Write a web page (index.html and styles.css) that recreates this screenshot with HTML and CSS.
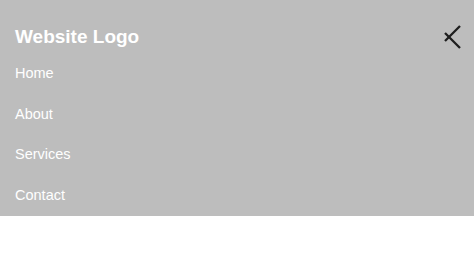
FILE: index.html
```html
<!DOCTYPE html>
<html lang="en">
<head>
    <meta charset="UTF-8">
    <meta name="viewport" content="width=device-width, initial-scale=1.0">
    <title>Website Logo</title>
    <link rel="stylesheet" href="styles.css">
</head>
<body>
    <div class="menu">
        <div class="menu-header">
            <span class="logo">Website Logo</span>
            <button class="close-btn" aria-label="Close menu">
                <svg width="20" height="26" viewBox="0 0 20 26">
                    <line x1="18" y1="2" x2="3" y2="17" />
                    <line x1="3" y1="9" x2="18" y2="24" />
                </svg>
            </button>
        </div>
        <ul class="nav-list">
            <li><a href="#">Home</a></li>
            <li><a href="#">About</a></li>
            <li><a href="#">Services</a></li>
            <li><a href="#">Contact</a></li>
        </ul>
    </div>
</body>
</html>
```

FILE: styles.css
```css
/* General Styles */
body {
    margin: 0;
    padding: 0;
    font-family: "Liberation Sans", Arial, sans-serif;
    background-color: #fff;
}

/* Menu */
.menu {
    background-color: #bdbdbd;
    padding: 0 15px;
    height: 216px;
}

.menu-header {
    display: flex;
    justify-content: space-between;
    align-items: center;
    height: 53px;
    padding-top: 20px;
    box-sizing: border-box;
}

.logo {
    color: #fff;
    font-size: 19px;
    font-weight: bold;
}

.close-btn {
    background: none;
    border: none;
    padding: 0;
    margin-right: -3px;
    cursor: pointer;
}

.close-btn svg {
    display: block;
    stroke: #1e1e1e;
    stroke-width: 2.3;
}

.nav-list {
    list-style: none;
    margin: 0;
    padding: 0;
}

.nav-list li {
    height: 40.5px;
    display: flex;
    align-items: center;
}

.nav-list a {
    color: #fff;
    text-decoration: none;
    font-size: 14.5px;
}
```
